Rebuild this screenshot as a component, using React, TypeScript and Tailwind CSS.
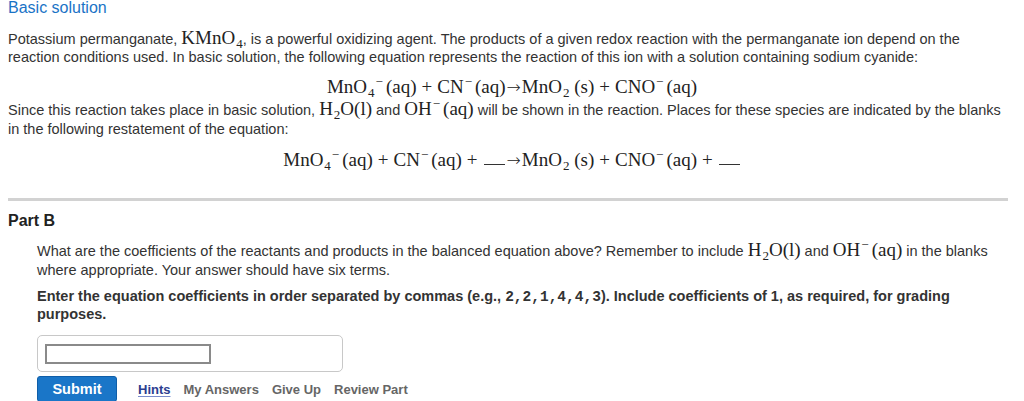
import React from "react";

const serif = "font-['Liberation_Serif','Times_New_Roman',serif]";

function Sub({ children }: { children: React.ReactNode }) {
  return <span className="relative top-[4px] text-[13px] leading-none ml-[1px]">{children}</span>;
}
function Sup({ children }: { children: React.ReactNode }) {
  return <span className="relative top-[-7px] text-[13px] leading-none ml-[1px] mr-[3px]">{children}</span>;
}
function P() {
  return <span className="mx-[5px]">+</span>;
}
function Arrow() {
  return <span className="font-['DejaVu_Sans',sans-serif] text-[17px] font-light mx-[1px]">→</span>;
}
function M({ children }: { children: React.ReactNode }) {
  return <span className={`${serif} text-[19px] text-[#222] whitespace-nowrap`}>{children}</span>;
}
function Blank() {
  return <span className="inline-block w-[21px] border-b border-[#333] relative top-[-1px] mx-[1px]" />;
}

export default function App() {
  return (
    <div className="w-[1024px] h-[401px] overflow-hidden bg-white text-[#333] font-['Liberation_Sans',Arial,sans-serif] text-[14.5px]">
      <div className="px-[8px]">
        <div className="text-[16px] leading-[16px] text-[#1a73c6]">Basic solution</div>
        <p className="mt-[13px] leading-[18px] pr-[12px]">
          Potassium permanganate, <M>KMnO<Sub>4</Sub></M>, is a powerful oxidizing agent. The products of a given redox reaction with the permanganate ion depend on the reaction conditions used. In basic solution, the following equation represents the reaction of this ion with a solution containing sodium cyanide:
        </p>
        <div className="text-center leading-[22px] mt-[10px]">
          <M>
            MnO<Sub>4</Sub><Sup>−</Sup>(aq)<P />CN<Sup>−</Sup>(aq)<Arrow />MnO<Sub>2</Sub> (s)<P />CNO<Sup>−</Sup>(aq)
          </M>
        </div>
        <p className="leading-[19px] pr-[12px]">
          Since this reaction takes place in basic solution, <M>H<Sub>2</Sub>O(l)</M> and <M>OH<Sup>−</Sup>(aq)</M> will be shown in the reaction. Places for these species are indicated by the blanks in the following restatement of the equation:
        </p>
        <div className="text-center leading-[22px] mt-[10px]">
          <M>
            MnO<Sub>4</Sub><Sup>−</Sup>(aq)<P />CN<Sup>−</Sup>(aq)<P /><Blank /><Arrow />MnO<Sub>2</Sub> (s)<P />CNO<Sup>−</Sup>(aq)<P /><Blank />
          </M>
        </div>
        <div className="mt-[26px] mr-[8px] h-[3px] bg-[#d2d2d2]" />
        <div className="mt-[12px] font-bold text-[16px] leading-[16px] text-[#222]">Part B</div>
        <div className="pl-[29px] pr-[20px]">
          <p className="mt-[11px] leading-[19px]">
            What are the coefficients of the reactants and products in the balanced equation above? Remember to include <M>H<Sub>2</Sub>O(l)</M> and <M>OH<Sup>−</Sup>(aq)</M> in the blanks where appropriate. Your answer should have six terms.
          </p>
          <p className="mt-[8px] leading-[17px] font-bold pr-[30px]">
            Enter the equation coefficients in order separated by commas (e.g., <span className="font-['Liberation_Mono','Courier_New',monospace]">2,2,1,4,4,3</span>). Include coefficients of 1, as required, for grading purposes.
          </p>
          <div className="mt-[12px] w-[306px] h-[37px] border border-[#c8c8c8] rounded-[5px] flex items-center pl-[7px]">
            <div className="w-[166px] h-[20px] border-2 border-[#8a8a8a] bg-white" />
          </div>
          <div className="mt-[4px] flex items-center">
            <button className="w-[80px] h-[26px] bg-[#1a76c8] border border-[#0f5ea8] rounded-[3px] text-white font-bold text-[14.5px] leading-none">
              Submit
            </button>
            <div className="ml-[21px] flex gap-[13px] text-[13px] font-bold text-[#666] pt-[1px]">
              <span className="text-[#2b3d8f] underline decoration-[#7a8ccc] underline-offset-2">Hints</span>
              <span>My Answers</span>
              <span>Give Up</span>
              <span>Review Part</span>
            </div>
          </div>
        </div>
      </div>
    </div>
  );
}
